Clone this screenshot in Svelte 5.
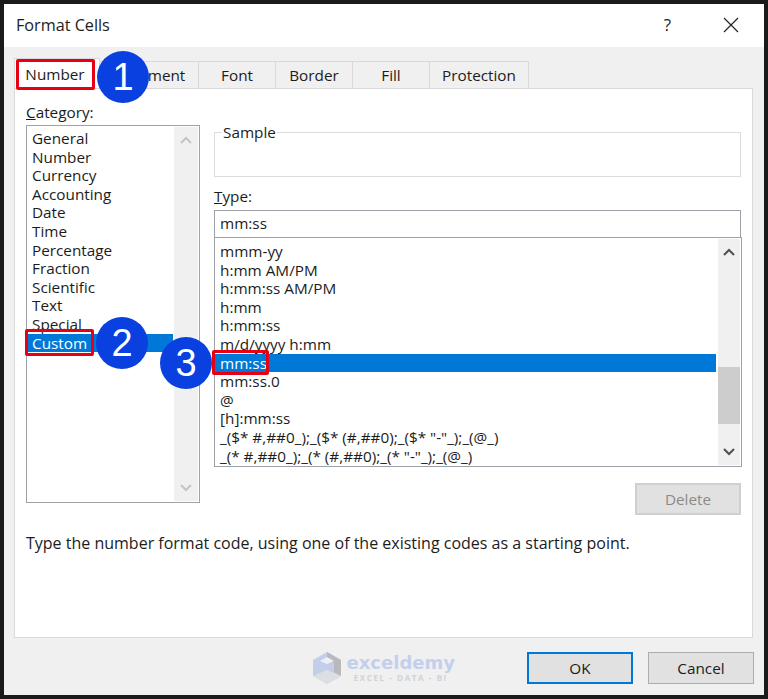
<script>
	const tabs = ['Number', 'Alignment', 'Font', 'Border', 'Fill', 'Protection'];
	const categories = ['General', 'Number', 'Currency', 'Accounting', 'Date', 'Time', 'Percentage', 'Fraction', 'Scientific', 'Text', 'Special', 'Custom'];
	const formats = [
		'mmm-yy',
		'h:mm AM/PM',
		'h:mm:ss AM/PM',
		'h:mm',
		'h:mm:ss',
		'm/d/yyyy h:mm',
		'mm:ss',
		'mm:ss.0',
		'@',
		'[h]:mm:ss',
		'_($* #,##0_);_($* (#,##0);_($* "-"_);_(@_)',
		'_(* #,##0_);_(* (#,##0);_(* "-"_);_(@_)'
	];
</script>

<main>
	<div class="dialog">
		<header class="titlebar">
			<span class="title">Format Cells</span>
			<span class="help">?</span>
			<svg class="close" width="16" height="16" viewBox="0 0 16 16">
				<path d="M1 1 L15 15 M15 1 L1 15" stroke="#222" stroke-width="1.2" fill="none" />
			</svg>
		</header>

		<div class="body">
			<div class="tabs">
				{#each tabs as tab, i}
					<div class="tab" class:active={i === 0}>{tab}</div>
				{/each}
			</div>

			<section class="panel">
				<div class="columns">
					<div class="left">
						<div class="label"><u>C</u>ategory:</div>
						<div class="listbox category">
							<div class="rows">
								{#each categories as item}
									<div class="row" class:selected={item === 'Custom'}>{item}</div>
								{/each}
							</div>
							<div class="scrollbar">
								<svg width="12" height="8" viewBox="0 0 12 8"><path d="M1 7 L6 2 L11 7" stroke="#c4c4c4" stroke-width="2" fill="none" /></svg>
								<svg width="12" height="8" viewBox="0 0 12 8"><path d="M1 1 L6 6 L11 1" stroke="#c4c4c4" stroke-width="2" fill="none" /></svg>
							</div>
						</div>
					</div>

					<div class="right">
						<fieldset class="sample">
							<legend>Sample</legend>
						</fieldset>
						<div class="label type-label"><u>T</u>ype:</div>
						<div class="type-input">mm:ss</div>
						<div class="listbox formats">
							<div class="rows">
								{#each formats as item}
									<div class="row" class:selected={item === 'mm:ss'}>{item}</div>
								{/each}
							</div>
							<div class="scrollbar">
								<svg width="12" height="8" viewBox="0 0 12 8"><path d="M1 7 L6 2 L11 7" stroke="#505050" stroke-width="2" fill="none" /></svg>
								<div class="thumb"></div>
								<svg width="12" height="8" viewBox="0 0 12 8"><path d="M1 1 L6 6 L11 1" stroke="#505050" stroke-width="2" fill="none" /></svg>
							</div>
						</div>
						<div class="delete-row">
							<button class="btn disabled">Delete</button>
						</div>
					</div>
				</div>
				<p class="hint">Type the number format code, using one of the existing codes as a starting point.</p>
			</section>

			<footer class="footer">
				<div class="watermark">
					<svg width="28" height="32" viewBox="0 0 28 32">
						<path d="M14 0 L28 8 L28 24 L14 32 L0 24 L0 8 Z" fill="#c3cfe9" />
						<path d="M14 0 L28 8 L28 24 L21 20 L21 11 L14 7 Z" fill="#b9b9bd" />
						<path d="M14 12 L21 9 L14 5 L7 9 Z" fill="#eef0f4" />
						<path d="M14 32 L0 24 L14 18 L28 24 Z" fill="#dcdee2" />
					</svg>
					<div class="wm-text">
						<span class="wm-name">exceldemy</span>
						<span class="wm-sub">EXCEL - DATA - BI</span>
					</div>
				</div>
				<button class="btn ok">OK</button>
				<button class="btn">Cancel</button>
			</footer>
		</div>

		<div class="mark red-1"></div>
		<div class="mark red-2"></div>
		<div class="mark red-3"></div>
		<div class="badge badge-1">1</div>
		<div class="badge badge-2">2</div>
		<div class="badge badge-3">3</div>
	</div>
</main>

<style>
	:global(body) {
		background: #1a1a1a;
	}

	main {
		width: 768px;
		height: 699px;
		box-sizing: border-box;
		padding: 4px;
		font-family: "Open Sans", "Noto Sans", sans-serif;
		font-size: 15.3px;
		color: #1c1c1c;
		overflow: hidden;
	}

	.dialog {
		position: relative;
		height: 691px;
		background: #f0f0f0;
		display: flex;
		flex-direction: column;
	}

	.titlebar {
		height: 43px;
		flex: none;
		background: #fff;
		display: flex;
		align-items: center;
		padding-left: 12px;
		padding-bottom: 2px;
		box-sizing: border-box;
	}

	.title {
		font-size: 16.2px;
		flex: 1;
	}

	.help {
		font-size: 17px;
		margin-right: 52px;
	}

	.close {
		margin-right: 25px;
	}

	.body {
		flex: 1;
		display: flex;
		flex-direction: column;
		padding: 11px 12px 0 10px;
	}

	.tabs {
		display: flex;
		height: 30px;
		align-items: flex-end;
		flex: none;
	}

	.tab {
		height: 27px;
		box-sizing: border-box;
		border: 1px solid #d9d9d9;
		border-bottom: none;
		margin-left: -1px;
		display: flex;
		align-items: center;
		justify-content: center;
		background: #f0f0f0;
		width: 78px;
	}

	.tab:nth-child(2) { width: 100px; }
	.tab:last-child { width: 100px; }

	.tab.active {
		height: 30px;
		width: 86px;
		margin-left: 0;
		padding-right: 4px;
		background: #fff;
	}

	.panel {
		height: 550px;
		flex: none;
		box-sizing: border-box;
		background: #fff;
		border: 1px solid #d9d9d9;
		margin-right: -1px;
		padding: 13px 10px 0 11px;
	}

	.columns {
		display: flex;
		gap: 14px;
	}

	.left {
		width: 174px;
		flex: none;
	}

	.right {
		width: 527px;
		flex: none;
	}

	.label {
		height: 23px;
		line-height: 20px;
	}

	.listbox {
		display: flex;
		box-sizing: border-box;
		border: 1px solid #a0a0a8;
		background: #fff;
	}

	.listbox .rows {
		flex: 1;
		min-width: 0;
		padding-top: 3px;
	}

	.row {
		height: 18.6px;
		line-height: 18.6px;
		padding-left: 5px;
		white-space: nowrap;
	}

	.row.selected {
		background: #0078d7;
		color: #fff;
	}

	.category {
		height: 378px;
	}

	.scrollbar {
		width: 24px;
		flex: none;
		background: #f0f0f0;
		margin: 1px;
		display: flex;
		flex-direction: column;
		align-items: center;
		justify-content: space-between;
		padding: 9px 0;
		box-sizing: border-box;
		position: relative;
	}

	.sample {
		margin: 23px 0 0;
		padding: 0;
		height: 52px;
		box-sizing: border-box;
		border: 1px solid #dcdcdc;
		width: 527px;
	}

	.sample legend {
		margin-left: 7px;
		padding: 0 1px;
		line-height: 14px;
	}

	.type-label {
		margin-top: 9px;
		height: 24px;
	}

	.type-input {
		height: 28px;
		box-sizing: border-box;
		border: 1px solid #a0a0a8;
		padding-left: 5px;
		line-height: 25px;
	}

	.formats {
		height: 230px;
		margin-top: -1px;
		margin-right: -1px;
	}

	.formats .rows {
		padding-top: 4px;
	}

	.formats .scrollbar {
		width: 22px;
		margin-left: 2px;
	}

	.thumb {
		position: absolute;
		left: 0;
		right: 0;
		top: 128px;
		height: 57px;
		background: #cdcdcd;
	}

	.delete-row {
		display: flex;
		justify-content: flex-end;
		margin-top: 16px;
	}

	.btn {
		width: 106px;
		height: 32px;
		box-sizing: border-box;
		background: #e1e1e1;
		border: 1px solid #adadad;
		font: inherit;
		color: inherit;
		padding: 0;
	}

	.btn.disabled {
		color: #8a8a8a;
		border: 2px solid #cfcfcf;
	}

	.btn.ok {
		border: 2px solid #0078d7;
	}

	.hint {
		margin: 18px 0 0;
		line-height: 20px;
		font-size: 16px;
	}

	.footer {
		flex: 1;
		display: flex;
		align-items: flex-start;
		justify-content: flex-end;
		gap: 15px;
		padding-top: 14px;
		margin-right: -2px;
	}

	.watermark {
		display: flex;
		align-items: center;
		gap: 6px;
		margin-right: 57px;
	}

	.wm-text {
		display: flex;
		flex-direction: column;
		line-height: 1;
	}

	.wm-name {
		font-family: "DejaVu Sans", sans-serif;
		font-weight: 700;
		font-size: 18px;
		color: #c3d0ec;
	}

	.wm-sub {
		font-size: 8px;
		letter-spacing: 1.6px;
		margin-top: 2px;
		color: #cfd2d8;
		text-align: center;
		font-weight: 700;
	}

	.mark {
		position: absolute;
		box-sizing: border-box;
		border: 3px solid #e60012;
		border-radius: 2px;
	}

	.red-1 { left: 12px; top: 55px; width: 79px; height: 31px; }
	.red-2 { left: 21px; top: 325px; width: 69px; height: 27px; }
	.red-3 { left: 208px; top: 346px; width: 57px; height: 25px; }

	.badge {
		position: absolute;
		width: 52px;
		height: 52px;
		border-radius: 50%;
		background: #0a3fe0;
		color: #fff;
		font-family: "Liberation Sans", sans-serif;
		font-size: 38px;
		line-height: 52px;
		text-align: center;
	}

	.badge-1 { left: 93px; top: 47px; }
	.badge-2 { left: 92px; top: 313px; }
	.badge-3 { left: 156px; top: 333px; }
</style>
